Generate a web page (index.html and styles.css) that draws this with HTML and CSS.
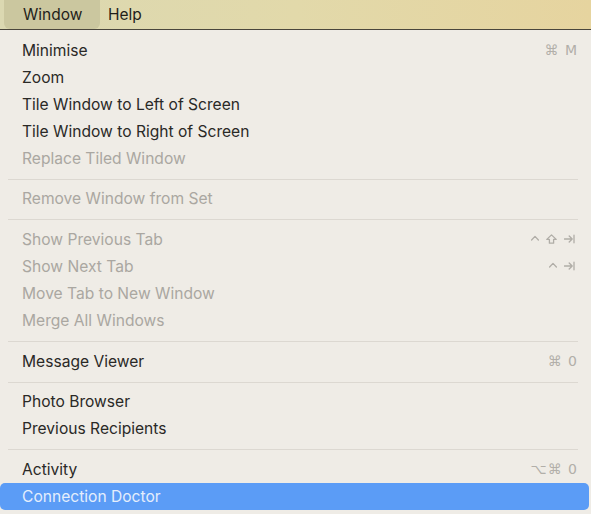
FILE: index.html
```html
<!DOCTYPE html>
<html>
<head>
<meta charset="utf-8">
<link rel="stylesheet" href="styles.css">
</head>
<body>
<div class="menubar">
  <div class="mb-item active">Window</div>
  <div class="mb-item">Help</div>
</div>
<div class="menu">
  <div class="row"><span>Minimise</span><span class="sc">⌘ M</span></div>
  <div class="row"><span>Zoom</span></div>
  <div class="row"><span>Tile Window to Left of Screen</span></div>
  <div class="row"><span>Tile Window to Right of Screen</span></div>
  <div class="row dis"><span>Replace Tiled Window</span></div>
  <div class="sep"></div>
  <div class="row dis"><span>Remove Window from Set</span></div>
  <div class="sep"></div>
  <div class="row dis"><span>Show Previous Tab</span>
    <span class="icons">
      <svg class="ic caret" viewBox="0 0 8 6"><polyline points="0.6,5 4,1.4 7.4,5"/></svg>
      <svg class="ic shift" viewBox="0 0 11 10"><path d="M5.5 0.9 L10.2 5.4 H7.6 V9.2 H3.4 V5.4 H0.8 Z"/></svg>
      <svg class="ic tab" viewBox="0 0 11 10"><path d="M0.5 5 H8.2 M5.2 2 L8.2 5 L5.2 8 M10 1.2 V8.8"/></svg>
    </span>
  </div>
  <div class="row dis"><span>Show Next Tab</span>
    <span class="icons">
      <svg class="ic caret" viewBox="0 0 8 6"><polyline points="0.6,5 4,1.4 7.4,5"/></svg>
      <svg class="ic tab" viewBox="0 0 11 10"><path d="M0.5 5 H8.2 M5.2 2 L8.2 5 L5.2 8 M10 1.2 V8.8"/></svg>
    </span>
  </div>
  <div class="row dis"><span>Move Tab to New Window</span></div>
  <div class="row dis"><span>Merge All Windows</span></div>
  <div class="sep"></div>
  <div class="row"><span>Message Viewer</span><span class="sc">⌘ 0</span></div>
  <div class="sep"></div>
  <div class="row"><span>Photo Browser</span></div>
  <div class="row"><span>Previous Recipients</span></div>
  <div class="sep"></div>
  <div class="row"><span>Activity</span><span class="sc">⌥⌘ 0</span></div>
  <div class="row sel"><span>Connection Doctor</span></div>
</div>
</body>
</html>
```
FILE: styles.css
```css
html, body {
  margin: 0;
  padding: 0;
  background: #efece6;
  font-family: Inter, "Noto Sans", "DejaVu Sans", sans-serif;
  -webkit-font-smoothing: antialiased;
}
.menubar {
  height: 29px;
  display: flex;
  align-items: stretch;
  padding-left: 4px;
  background: linear-gradient(90deg, #dbd8b1 0%, #e2d9aa 50%, #e6d49f 100%);
  border-bottom: 1px solid #4a463c;
}
.mb-item {
  display: flex;
  align-items: center;
  font-size: 15.5px;
  color: #1f1e1a;
}
.mb-item.active {
  background: #cbc79f;
  border-radius: 0 0 6px 6px;
  padding: 0 0 0 19px;
  width: 77px;
}
.mb-item + .mb-item {
  padding-left: 8px;
}
.menu {
  padding-top: 6.5px;
}
.row {
  height: 27px;
  display: flex;
  align-items: center;
  justify-content: space-between;
  padding: 0 13px 0 22px;
  font-size: 15.6px;
  color: #2a2926;
}
.row.dis {
  color: #aaa7a1;
}
.sc {
  color: #b2afa9;
  font-size: 14px;
  letter-spacing: 1px;
  font-family: "DejaVu Sans", sans-serif;
}
.icons {
  display: flex;
  align-items: center;
  gap: 7px;
  margin-right: 3px;
}
.ic {
  fill: none;
  stroke: #b0ada7;
  stroke-width: 1.3;
  stroke-linejoin: round;
  stroke-linecap: round;
}
.ic.caret {
  width: 8px;
  height: 6px;
  margin-top: -3px;
}
.ic.shift {
  width: 11px;
  height: 10px;
}
.ic.tab {
  width: 11px;
  height: 10px;
}
.sep {
  height: 1px;
  margin: 7px 13px 5.7px 8px;
  background: #dcd8d1;
}
.row.sel {
  background: #5b9cf6;
  color: #e4eefc;
  border-radius: 5px;
  margin-right: 2px;
}
```
